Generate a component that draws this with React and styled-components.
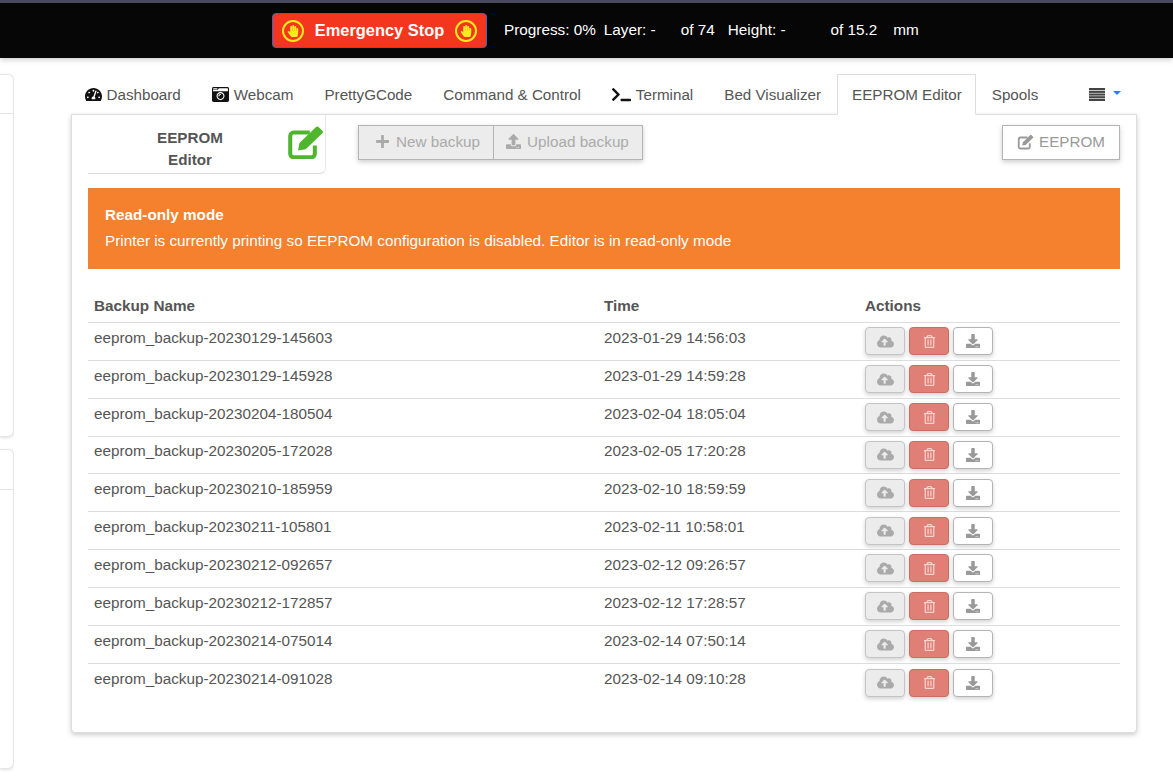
import React from "react";
import styled, { createGlobalStyle } from "styled-components";
import {
  FaTachometerAlt,
  FaCameraRetro,
  FaTerminal,
  FaPlus,
  FaUpload,
  FaCloudUploadAlt,
  FaRegTrashAlt,
  FaDownload,
  FaHandPaper,
} from "react-icons/fa";

const GlobalStyle = createGlobalStyle`
  html, body {
    margin: 0;
    padding: 0;
    background: #fff;
    font-family: "Liberation Sans", Arial, sans-serif;
    color: #555;
    overflow: hidden;
  }
`;

const Page = styled.div`
  width: 1173px;
  height: 780px;
  display: flex;
  flex-direction: column;
  overflow: hidden;
`;

const TopBar = styled.header`
  height: 55px;
  flex: none;
  background: #060606;
  border-top: 3px solid #4a4a5e;
  box-shadow: 0 1px 6px rgba(0, 0, 0, 0.25);
  display: flex;
  align-items: center;
  padding-left: 272px;
  color: #fff;
  font-size: 15.3px;
`;

const StopButton = styled.button`
  width: 215px;
  height: 35px;
  box-sizing: border-box;
  background: #f4361e;
  border: 1px solid #3f63c4;
  border-radius: 4px;
  color: #fff;
  font: bold 16.4px "Liberation Sans", Arial, sans-serif;
  display: flex;
  align-items: center;
  justify-content: space-between;
  padding: 0 9px;
`;

const HandRing = styled.span`
  width: 22px;
  height: 22px;
  box-sizing: border-box;
  border: 2px solid #fdea1f;
  border-radius: 50%;
  color: #fdea1f;
  font-size: 12px;
  display: flex;
  align-items: center;
  justify-content: center;
`;

const Stat = styled.span`
  margin: 0 0 2px ${(p) => p.$gap}px;
  white-space: nowrap;
`;

const Body = styled.div`
  flex: 1;
  display: flex;
  min-height: 0;
`;

const SideColumn = styled.aside`
  width: 14px;
  flex: none;
  padding-top: 16px;
  overflow: hidden;
  display: flex;
  flex-direction: column;
  gap: 12px;
`;

const SideCard = styled.div`
  width: 14px;
  height: ${(p) => p.$height}px;
  flex: none;
  box-sizing: border-box;
  background: #fff;
  border: 1px solid #e6e6e6;
  border-left: none;
  border-radius: 0 6px 6px 0;
  box-shadow: 0 1px 3px rgba(0, 0, 0, 0.12);
  padding-top: ${(p) => p.$ruleAt}px;
`;

const SideRule = styled.div`
  height: 1px;
  background: #e4e4e4;
`;

const Main = styled.main`
  margin-left: 57px;
  width: 1066px;
  flex: none;
  padding-top: 16px;
`;

const Tabs = styled.nav`
  height: 41px;
  margin-left: -2px;
  display: flex;
  position: relative;
  z-index: 1;
`;

const Tab = styled.a`
  box-sizing: border-box;
  height: 41px;
  padding: 0 ${(p) => (p.$active ? "13.5px" : "14.5px")} 0 14.5px;
  display: flex;
  align-items: center;
  gap: 5px;
  font-size: 15.2px;
  color: #555;
  white-space: nowrap;
  background: ${(p) => (p.$active ? "#fff" : "transparent")};
  border: 1px solid ${(p) => (p.$active ? "#ddd" : "transparent")};
  border-bottom-color: ${(p) => (p.$active ? "#fff" : "transparent")};
  svg {
    color: #111;
    font-size: ${(p) => p.$iconSize || 17}px;
    flex: none;
  }
`;

const TabMenu = styled.div`
  margin-left: 35px;
  display: flex;
  align-items: center;
  gap: 8px;
  color: #444;
`;

const Caret = styled.span`
  width: 0;
  height: 0;
  border-left: 4.5px solid transparent;
  border-right: 4.5px solid transparent;
  border-top: 4.5px solid #2f7cf6;
  margin-top: -3px;
`;

const Panel = styled.section`
  box-sizing: border-box;
  margin-top: -1px;
  height: 619px;
  background: #fff;
  border: 1px solid #ddd;
  border-radius: 0 0 4px 4px;
  box-shadow: 0 2px 5px rgba(0, 0, 0, 0.2);
  padding: 0 16px;
`;

const Toolbar = styled.div`
  display: flex;
  align-items: flex-start;
`;

const TitleBox = styled.div`
  box-sizing: border-box;
  width: 238px;
  height: 59px;
  border-bottom: 1px solid #ddd;
  border-right: 1px solid #e8e8e8;
  border-radius: 0 0 6px 0;
  display: flex;
  align-items: center;
`;

const Title = styled.h2`
  margin: 0;
  flex: 1;
  text-align: center;
  font-size: 15.2px;
  line-height: 22px;
  font-weight: bold;
  color: #555;
  padding: 9px 0 0 4px;
`;

const TitleIcon = styled.svg`
  width: 36px;
  height: 33px;
  color: #4fb52c;
  margin: -4px 1px 0 0;
`;

const EditGlyph = styled.svg`
  width: 17px;
  height: 16px;
  flex: none;
`;

const BtnGroup = styled.div`
  margin: 10px 0 0 32px;
  display: flex;
  box-shadow: 0 2px 5px rgba(0, 0, 0, 0.2);
`;

const GhostBtn = styled.div`
  box-sizing: border-box;
  height: 35px;
  padding: 0 13px 2px 16px;
  display: flex;
  align-items: center;
  gap: 6px;
  font-size: 15.27px;
  color: #aaa;
  background: #ececec;
  border: 1px solid #b4b4b4;
  white-space: nowrap;
  & + & {
    border-left: none;
    padding-left: 12px;
  }
  svg {
    font-size: 15px;
    flex: none;
  }
`;

const SideBtn = styled.div`
  margin: 10px 0 0 auto;
  box-sizing: border-box;
  width: 118px;
  height: 35px;
  padding-bottom: 2px;
  display: flex;
  align-items: center;
  justify-content: center;
  gap: 5px;
  font-size: 15.2px;
  color: #999;
  background: #fff;
  border: 1px solid #b4b4b4;
  box-shadow: 0 2px 5px rgba(0, 0, 0, 0.2);
`;

const Alert = styled.div`
  margin-top: 14px;
  height: 81px;
  box-sizing: border-box;
  background: #f5802e;
  color: #fff;
  padding: 14px 17px;
  font-size: 15.27px;
  line-height: 26px;
`;

const AlertTitle = styled.div`
  font-weight: bold;
`;

const Table = styled.div`
  margin-top: 24px;
  font-size: 15.27px;
`;

const Row = styled.div`
  display: grid;
  grid-template-columns: 510px 261px 1fr;
  box-sizing: border-box;
  height: ${(p) => (p.$head ? "30px" : "37.85px")};
  padding-left: 6px;
  padding-bottom: ${(p) => (p.$head ? "5px" : "0")};
  align-items: center;
  border-bottom: 1px solid #ddd;
  font-weight: ${(p) => (p.$head ? "bold" : "normal")};
  &:last-child {
    border-bottom: none;
  }
`;

const Cell = styled.span`
  margin-bottom: 8px;
`;

const Actions = styled.div`
  display: flex;
  gap: 4px;
`;

const variants = {
  restore: { bg: "#ececec", border: "#c4c4c4", color: "#aaa", size: 17 },
  remove: { bg: "#e07f75", border: "#c96e64", color: "#f6d5d1", size: 13 },
  save: { bg: "#fff", border: "#b4b4b4", color: "#999", size: 14 },
};

const IconBtn = styled.span`
  box-sizing: border-box;
  width: 40px;
  height: 28px;
  display: flex;
  align-items: center;
  justify-content: center;
  font-size: ${(p) => variants[p.$kind].size}px;
  border-radius: 4px;
  background: ${(p) => variants[p.$kind].bg};
  border: 1px solid ${(p) => variants[p.$kind].border};
  color: ${(p) => variants[p.$kind].color};
  box-shadow: 0 2px 4px rgba(0, 0, 0, 0.18);
`;

const backups = [
  ["eeprom_backup-20230129-145603", "2023-01-29 14:56:03"],
  ["eeprom_backup-20230129-145928", "2023-01-29 14:59:28"],
  ["eeprom_backup-20230204-180504", "2023-02-04 18:05:04"],
  ["eeprom_backup-20230205-172028", "2023-02-05 17:20:28"],
  ["eeprom_backup-20230210-185959", "2023-02-10 18:59:59"],
  ["eeprom_backup-20230211-105801", "2023-02-11 10:58:01"],
  ["eeprom_backup-20230212-092657", "2023-02-12 09:26:57"],
  ["eeprom_backup-20230212-172857", "2023-02-12 17:28:57"],
  ["eeprom_backup-20230214-075014", "2023-02-14 07:50:14"],
  ["eeprom_backup-20230214-091028", "2023-02-14 09:10:28"],
];

const EditShapes = () => (
  <>
    <path d="M21 6.5H6.5a3 3 0 0 0-3 3v16a3 3 0 0 0 3 3h16a3 3 0 0 0 3-3V18" fill="none" stroke="currentColor" strokeWidth="3.6" />
    <path d="M10.5 22.5l1.2-6.6L26.6 1.6a1.6 1.6 0 0 1 2.2 0l3.4 3.2a1.6 1.6 0 0 1 0 2.3L17.3 21.4z" fill="currentColor" />
  </>
);

const BarsIcon = () => (
  <svg width="16" height="13" viewBox="0 0 16 13" fill="currentColor">
    <rect y="0" width="16" height="2.1" />
    <rect y="2.8" width="16" height="2.1" />
    <rect y="5.5" width="16" height="2.1" />
    <rect y="8.2" width="16" height="2.1" />
    <rect y="10.9" width="16" height="2.1" />
  </svg>
);

export default function App() {
  return (
    <Page>
      <GlobalStyle />
      <TopBar>
        <StopButton>
          <HandRing><FaHandPaper /></HandRing>
          Emergency Stop
          <HandRing><FaHandPaper /></HandRing>
        </StopButton>
        <Stat $gap={17}>Progress: 0%</Stat>
        <Stat $gap={8}>Layer: -</Stat>
        <Stat $gap={25}>of 74</Stat>
        <Stat $gap={13}>Height: -</Stat>
        <Stat $gap={45}>of 15.2</Stat>
        <Stat $gap={16}>mm</Stat>
      </TopBar>
      <Body>
        <SideColumn>
          <SideCard $height={363} $ruleAt={38}><SideRule /></SideCard>
          <SideCard $height={320} $ruleAt={39}><SideRule /></SideCard>
        </SideColumn>
        <Main>
          <Tabs>
            <Tab><FaTachometerAlt />Dashboard</Tab>
            <Tab><FaCameraRetro />Webcam</Tab>
            <Tab>PrettyGCode</Tab>
            <Tab>Command &amp; Control</Tab>
            <Tab $iconSize={19}><FaTerminal />Terminal</Tab>
            <Tab>Bed Visualizer</Tab>
            <Tab $active>EEPROM Editor</Tab>
            <Tab>Spools</Tab>
            <TabMenu><BarsIcon /><Caret /></TabMenu>
          </Tabs>
          <Panel>
            <Toolbar>
              <TitleBox>
                <Title>EEPROM<br />Editor</Title>
                <TitleIcon viewBox="1.6 0.6 32 29.5"><EditShapes /></TitleIcon>
              </TitleBox>
              <BtnGroup>
                <GhostBtn><FaPlus />New backup</GhostBtn>
                <GhostBtn><FaUpload />Upload backup</GhostBtn>
              </BtnGroup>
              <SideBtn>
                <EditGlyph viewBox="0 0 34 31"><EditShapes /></EditGlyph>
                EEPROM
              </SideBtn>
            </Toolbar>
            <Alert>
              <AlertTitle>Read-only mode</AlertTitle>
              Printer is currently printing so EEPROM configuration is disabled. Editor is in read-only mode
            </Alert>
            <Table>
              <Row $head>
                <span>Backup Name</span>
                <span>Time</span>
                <span>Actions</span>
              </Row>
              {backups.map(([name, time]) => (
                <Row key={name}>
                  <Cell>{name}</Cell>
                  <Cell>{time}</Cell>
                  <Actions>
                    <IconBtn $kind="restore"><FaCloudUploadAlt /></IconBtn>
                    <IconBtn $kind="remove"><FaRegTrashAlt /></IconBtn>
                    <IconBtn $kind="save"><FaDownload /></IconBtn>
                  </Actions>
                </Row>
              ))}
            </Table>
          </Panel>
        </Main>
      </Body>
    </Page>
  );
}
